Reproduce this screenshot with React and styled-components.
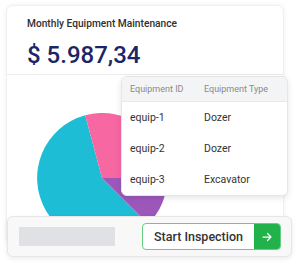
import React from 'react'
import styled, { createGlobalStyle } from 'styled-components'

const GlobalStyle = createGlobalStyle`
  html, body {
    margin: 0;
    padding: 0;
    background: #ffffff;
    font-family: Roboto, "Liberation Sans", Arial, sans-serif;
  }
`

const Page = styled.div`
  position: relative;
  width: 300px;
  height: 268px;
  overflow: hidden;
  background: #fff;
`

const Card = styled.div`
  margin: 5px 0 0 6px;
  width: 278px;
  height: 240px;
  background: #fff;
  border: 1px solid #f0f0f0;
  border-radius: 6px;
  box-shadow: 0 0 5px rgba(0, 0, 0, 0.06);
  box-sizing: border-box;
  overflow: hidden;
`

const Header = styled.div`
  padding: 11px 20px 5px;
  border-bottom: 1px solid #ececec;
`

const Title = styled.div`
  font-size: 10.2px;
  line-height: 14px;
  font-weight: 500;
  color: #2f2f2f;
`

const Amount = styled.div`
  margin-top: 10px;
  font-size: 24px;
  line-height: 28px;
  font-weight: 500;
  color: #1c2565;
`

const ChartArea = styled.div`
  padding: 38px 0 0 30px;
`

const Popover = styled.div`
  position: absolute;
  left: 121px;
  top: 76px;
  width: 167px;
  background: #fff;
  border: 1px solid #e6e6e6;
  border-radius: 6px;
  box-shadow: 0 2px 6px rgba(0, 0, 0, 0.1);
  overflow: hidden;
  box-sizing: border-box;
`

const Row = styled.div`
  display: grid;
  grid-template-columns: 74px 1fr;
  align-items: center;
  padding-left: 8px;
  height: ${({ head }) => (head ? '24px' : '31px')};
  background: ${({ head }) => (head ? '#f3f4f6' : '#fff')};
  border-bottom: ${({ head }) => (head ? '1px solid #e8e8e8' : 'none')};
  font-size: ${({ head }) => (head ? '9px' : '10.5px')};
  color: ${({ head }) => (head ? '#8a8a8a' : '#333')};
`

const Bar = styled.div`
  position: absolute;
  left: 7px;
  top: 216px;
  width: 285px;
  height: 41px;
  box-sizing: border-box;
  display: flex;
  align-items: center;
  justify-content: space-between;
  padding: 0 10px 0 11px;
  background: #f8f8f8;
  border: 1px solid #e6e6e6;
  border-radius: 6px;
  box-shadow: 0 2px 5px rgba(0, 0, 0, 0.08);
`

const Placeholder = styled.div`
  width: 96px;
  height: 19px;
  background: #dfe1e4;
`

const Button = styled.button`
  display: flex;
  align-items: stretch;
  width: 139px;
  height: 27px;
  padding: 0;
  border: 1px solid #62d07e;
  border-radius: 4px;
  background: #fff;
  overflow: hidden;
  cursor: pointer;
  font-family: inherit;
`

const ButtonLabel = styled.span`
  flex: 1;
  display: flex;
  align-items: center;
  justify-content: center;
  font-size: 12.5px;
  font-weight: 500;
  color: #333;
`

const ButtonIcon = styled.span`
  width: 26px;
  display: flex;
  align-items: center;
  justify-content: center;
  background: #22b24c;
`

const rows = [
  ['equip-1', 'Dozer'],
  ['equip-2', 'Dozer'],
  ['equip-3', 'Excavator'],
]

function Pie() {
  return (
    <svg width="130" height="130" viewBox="0 0 130 130">
      <path d="M65 65 L111 111 A65 65 0 1 1 48.2 2.2 Z" fill="#1dbdd5" />
      <path d="M65 65 L48.2 2.2 A65 65 0 0 1 130 65 Z" fill="#f767a2" />
      <path d="M65 65 L130 65 A65 65 0 0 1 111 111 Z" fill="#9d57bb" />
    </svg>
  )
}

export default function App() {
  return (
    <Page>
      <GlobalStyle />
      <Card>
        <Header>
          <Title>Monthly Equipment Maintenance</Title>
          <Amount>$ 5.987,34</Amount>
        </Header>
        <ChartArea>
          <Pie />
        </ChartArea>
      </Card>
      <Popover>
        <Row head>
          <span>Equipment ID</span>
          <span>Equipment Type</span>
        </Row>
        {rows.map(([id, type]) => (
          <Row key={id}>
            <span>{id}</span>
            <span>{type}</span>
          </Row>
        ))}
      </Popover>
      <Bar>
        <Placeholder />
        <Button>
          <ButtonLabel>Start Inspection</ButtonLabel>
          <ButtonIcon>
            <svg width="12" height="12" viewBox="0 0 24 24" fill="none" stroke="#fff" strokeWidth="2.5" strokeLinecap="round" strokeLinejoin="round">
              <path d="M4 12h16M13 5l7 7-7 7" />
            </svg>
          </ButtonIcon>
        </Button>
      </Bar>
    </Page>
  )
}
